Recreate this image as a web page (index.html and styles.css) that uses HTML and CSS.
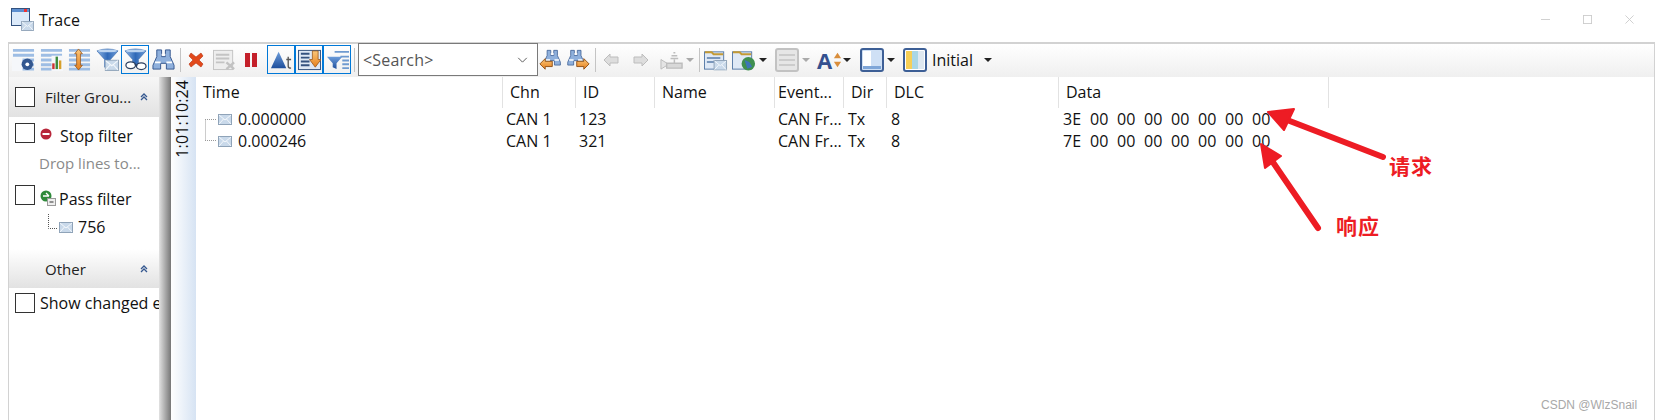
FILE: index.html
```html
<!DOCTYPE html>
<html lang="en">
<head>
<meta charset="utf-8">
<title>Trace</title>
<link rel="stylesheet" href="styles.css">
</head>
<body>
<svg class="defs" width="0" height="0">
  <defs>
    <linearGradient id="blue" x1="0" y1="0" x2="0" y2="1"><stop offset="0" stop-color="#6d9ddb"/><stop offset="1" stop-color="#1f4f9c"/></linearGradient>
    <linearGradient id="funnelg" x1="0" y1="0" x2="1" y2="0"><stop offset="0" stop-color="#8db4e4"/><stop offset=".5" stop-color="#2f69b8"/><stop offset="1" stop-color="#6e9bd6"/></linearGradient>
    <linearGradient id="org" x1="0" y1="0" x2="0" y2="1"><stop offset="0" stop-color="#fbc77a"/><stop offset="1" stop-color="#e57f1c"/></linearGradient>
    <symbol id="mail" viewBox="0 0 14 11"><rect x=".5" y=".5" width="13" height="10" fill="#c9d9ea" stroke="#8fa3b8"/><path d="M1 1l6 5 6-5M1 10l4.500-5M13 10L8.500 5" fill="none" stroke="#f4f8fc"/></symbol>
    <symbol id="lines" viewBox="0 0 24 24"><path d="M1 2.500h22M1 7.500h22M1 12.500h22M1 17.500h22M1 22h22" stroke="#9dbde4" stroke-width="3" fill="none"/></symbol>
    <symbol id="funnel" viewBox="0 0 24 24"><path d="M1 3q11-4 22 0l-8 9v5l-6 3v-8z" fill="url(#funnelg)" stroke="#3f6fb0" stroke-width=".7"/><ellipse cx="12" cy="3" rx="10" ry="1.500" fill="#bcd4f0"/></symbol>
    <symbol id="bino" viewBox="0 0 24 24"><path d="M5 2h5v7h4V2h5v7l4 9v4h-8v-6h-6v6H1v-4l4-9z" fill="#8fb0dc" stroke="#34578f"/><path d="M3 15h6M15 15h6M10 7h4" stroke="#fff" stroke-width="2"/></symbol>
    <symbol id="arrowl" viewBox="0 0 16 14"><path d="M1 7l6-6v3h8v6H7v3z" fill="url(#org)" stroke="#8a4a10"/></symbol>
    <symbol id="greyarrow" viewBox="0 0 16 14"><path d="M1 7l6-6v3h8v6H7v3z" fill="#ddd" stroke="#bdbdbd"/></symbol>
  </defs>
</svg>

<div class="window">
  <header class="titlebar">
    <svg class="title-icon" viewBox="0 0 24 23"><rect x=".5" y=".5" width="18" height="17" fill="#dceafa" stroke="#33527f"/><rect x="1" y="1" width="17" height="3" fill="#5d8fd0"/><rect x="13" y="1" width="3" height="3" fill="#e33"/><use href="#mail" x="9" y="13" width="15" height="10"/></svg>
    <span class="title-text">Trace</span>
    <div class="win-controls">
      <svg class="win-btn" viewBox="0 0 10 10"><path d="M0 5h10" stroke="#ccc"/></svg>
      <svg class="win-btn" viewBox="0 0 10 10"><rect x=".5" y=".5" width="9" height="9" fill="none" stroke="#ccc"/></svg>
      <svg class="win-btn" viewBox="0 0 10 10"><path d="M.5.500l9 9M9.500.500l-9 9" stroke="#ccc"/></svg>
    </div>
  </header>

  <div class="frame">
    <div class="toolbar">
      <div class="tb"><svg class="ico" viewBox="0 0 24 24"><use href="#lines" width="24" height="24"/><rect x="0" y="10" width="11" height="14" fill="#f5f7fa"/><circle cx="16" cy="17" r="6" fill="#34578f"/><circle cx="16" cy="17" r="2" fill="#fff"/></svg></div>
      <div class="tb"><svg class="ico" viewBox="0 0 24 24"><use href="#lines" width="24" height="24"/><rect x="12" y="8" width="12" height="16" fill="#f5f7fa"/><path d="M14 22v-6" stroke="#c33" stroke-width="2.500"/><path d="M17.500 22V9" stroke="#3a8a3a" stroke-width="2.500"/><path d="M21 22v-9" stroke="#d7a02a" stroke-width="2.500"/></svg></div>
      <div class="tb"><svg class="ico" viewBox="0 0 24 24"><use href="#lines" width="24" height="24"/><path d="M7 6l4-5 4 5h-2v12h2l-4 5-4-5h2V6z" fill="url(#org)" stroke="#96551a" stroke-width=".8"/></svg></div>
      <div class="tb"><svg class="ico" viewBox="0 0 24 24"><use href="#funnel" width="24" height="24"/><use href="#mail" x="9" y="12" width="15" height="12"/></svg></div>
      <div class="tb tb-on"><svg class="ico" viewBox="0 0 24 24"><use href="#funnel" width="24" height="24"/><ellipse cx="7" cy="18" rx="5" ry="3.500" fill="#fff" stroke="#2b3f60" stroke-width="1.300"/><ellipse cx="18" cy="19" rx="5" ry="3.500" fill="#fff" stroke="#2b3f60" stroke-width="1.300"/><path d="M11 17l3 1" stroke="#2b3f60"/></svg></div>
      <div class="tb"><svg class="ico" viewBox="0 0 24 24"><use href="#bino" width="24" height="24"/></svg></div>
      <i class="sep sep-a"></i>
      <div class="tb"><svg class="ico-s" viewBox="0 0 16 16"><path d="M3 1l5 4 5-4 2 3-4 4 4 4-2 3-5-4-5 4-2-3 4-4-4-4z" fill="#e2491b" stroke="#b5300d" stroke-width=".6"/></svg></div>
      <div class="tb"><svg class="ico" viewBox="0 0 24 24"><rect x=".5" y="2.500" width="20" height="20" fill="#eee" stroke="#c4c4c4"/><path d="M3 7h14M3 11h14M3 15h9" stroke="#c4c4c4" stroke-width="2"/><path d="M14 15l8 7M22 15l-8 7" stroke="#c2c2c2" stroke-width="2.500"/></svg></div>
      <div class="tb tb-pause"><svg class="ico-s" viewBox="0 0 16 16"><rect x="2" y="1" width="5" height="14" fill="#c4202a"/><rect x="9" y="1" width="5" height="14" fill="#c4202a"/></svg></div>
      <div class="tb tb-on"><svg class="ico" viewBox="0 0 24 24"><path d="M1 21L9 4l8 17z" fill="url(#blue)"/><path d="M19 9v10q0 2 3 2M17 12h5" fill="none" stroke="#555" stroke-width="1.400"/></svg></div>
      <div class="tb tb-on"><svg class="ico" viewBox="0 0 24 24"><rect x=".5" y="2.500" width="23" height="20" fill="#dfe8f4" stroke="#35527f"/><path d="M3 6h9M3 10h9M3 14h9M3 18h9" stroke="#35527f" stroke-width="2"/><path d="M15 3h6v9h3l-6 8-6-8h3z" fill="url(#org)" stroke="#96551a" stroke-width=".8"/></svg></div>
      <div class="tb tb-on"><svg class="ico" viewBox="0 0 24 24"><path d="M9 4h15M15 9h9M17 13h7M17 17h7M17 21h7" stroke="#6f9ad0" stroke-width="2" fill="none"/><path d="M1 9h16l-6 7v6l-4-2v-4z" fill="url(#blue)"/></svg></div>
      <i class="sep sep-b"></i>
      <div class="search"><span class="search-text">&lt;Search&gt;</span><svg class="search-chev" viewBox="0 0 12 7"><path d="M1 1l5 5 5-5" fill="none" stroke="#555" stroke-width="1.100"/></svg></div>
      <div class="tb tb-after"><svg class="ico" viewBox="0 0 26 24"><use href="#bino" x="5" y="0" width="20" height="20"/><use href="#arrowl" x="0" y="10" width="16" height="14"/></svg></div>
      <div class="tb"><svg class="ico" viewBox="0 0 26 24"><use href="#bino" x="0" y="0" width="20" height="20"/><g transform="translate(26 0) scale(-1 1)"><use href="#arrowl" x="0" y="10" width="16" height="14"/></g></svg></div>
      <i class="sep sep-d"></i>
      <div class="tb tb-nav"><svg class="ico-s" viewBox="0 0 16 14"><use href="#greyarrow" width="16" height="14"/></svg></div>
      <div class="tb tb-nav"><svg class="ico-s flip" viewBox="0 0 16 14"><use href="#greyarrow" width="16" height="14"/></svg></div>
      <div class="tb tb-bus"><svg class="ico-bus" viewBox="0 0 24 24"><path d="M1 12l8 5-8 5z" fill="#e4e4e4" stroke="#bbb"/><path d="M7 16h16v5H7zM15 16v-4M11 11h8M12 8h6M14 5h2" stroke="#bdbdbd" stroke-width="1.500" fill="#d8d8d8"/></svg><i class="caret caret-off"></i></div>
      <i class="sep sep-c"></i>
      <div class="ti"><svg class="ico-w" viewBox="0 0 25 22"><rect x=".5" y="2.500" width="20" height="18" fill="#dfe9f6" stroke="#587ba8"/><path d="M1 3h7l2 2h10" fill="none" stroke="#c49a35" stroke-width="2"/><path d="M3 9h14M3 13h8" stroke="#587ba8" stroke-width="1.500"/><use href="#mail" x="9" y="11" width="16" height="11"/></svg></div>
      <div class="ti ti-2"><svg class="ico-w" viewBox="0 0 25 22"><rect x=".5" y="2.500" width="20" height="18" fill="#dfe9f6" stroke="#587ba8"/><path d="M1 3h7l2 2h10" fill="none" stroke="#c49a35" stroke-width="2"/><circle cx="17" cy="15" r="7" fill="#3f8f50"/><path d="M13 11l5 2 3 5-5 2z" fill="#3c74b8"/></svg><i class="caret"></i></div>
      <div class="ti ti-3"><svg class="ico-w" viewBox="0 0 24 24"><rect x="1" y="1" width="22" height="22" rx="2" fill="#e6e6e6" stroke="#c2c2c2" stroke-width="2"/><path d="M4 7h16M4 12h16M4 17h16" stroke="#c4c4c4" stroke-width="1.500"/></svg><i class="caret caret-off"></i></div>
      <div class="ti ti-4"><span class="font-a">A</span><svg class="updown" viewBox="0 0 10 16"><path d="M5 0l4 6H1z" fill="#d98e3c"/><path d="M5 16l4-6H1z" fill="#d98e3c"/></svg><i class="caret"></i></div>
      <div class="ti ti-5"><svg class="ico-w" viewBox="0 0 24 24"><rect x="1" y="1" width="22" height="22" rx="2" fill="#cfe0f5" stroke="#3d5f96" stroke-width="2"/><rect x="3" y="3" width="8" height="15" fill="#fff"/><rect x="3" y="18" width="18" height="3" fill="#7fa6d8"/></svg><i class="caret"></i></div>
      <div class="ti ti-6"><svg class="ico-w" viewBox="0 0 24 24"><rect x="1" y="1" width="22" height="22" rx="2" fill="#fff" stroke="#3d5f96" stroke-width="2"/><rect x="3" y="3" width="6" height="18" fill="#f6cf57"/><rect x="9" y="3" width="6" height="18" fill="#a9d6e4"/><rect x="15" y="3" width="6" height="18" fill="#dfe8f0"/></svg><span class="initial">Initial</span><i class="caret caret-far"></i></div>
    </div>

    <div class="main">
      <aside class="side">
        <div class="group-head group-first">
          <span class="check"></span>
          <span class="group-title">Filter Grou...</span>
          <svg class="chev" viewBox="0 0 8 8"><path d="M1 4l3-3 3 3M1 7l3-3 3 3" fill="none" stroke="#34578f" stroke-width="1.300"/></svg>
        </div>
        <div class="filter-row stop-row">
          <span class="check check-up"></span>
          <svg class="filter-ico" viewBox="0 0 12 12"><circle cx="6" cy="6" r="5.500" fill="#b8263a"/><rect x="2.500" y="5" width="7" height="2" fill="#fff"/></svg>
          <span>Stop filter</span>
        </div>
        <div class="drop">Drop lines to...</div>
        <div class="filter-row pass-row">
          <span class="check check-up2"></span>
          <svg class="filter-ico pass-ico" viewBox="0 0 16 16"><circle cx="6" cy="6" r="5.500" fill="#2f8a3a"/><path d="M3 6h6M6 3l3 3" stroke="#fff" stroke-width="1.300" fill="none"/><rect x="7.500" y="8.500" width="8" height="7" fill="#eee" stroke="#999"/><path d="M9.500 12h4" stroke="#333"/></svg>
          <span>Pass filter</span>
        </div>
        <div class="child-row">
          <svg class="child-line" viewBox="0 0 9 15"><path d="M.5 0v14.500H9" fill="none" stroke="#555" stroke-dasharray="1 1"/></svg>
          <svg class="mail mail-child" viewBox="0 0 14 11"><use href="#mail" width="14" height="11"/></svg>
          <span>756</span>
        </div>
        <div class="group-head group-other">
          <span class="group-title group-title-other">Other</span>
          <svg class="chev" viewBox="0 0 8 8"><path d="M1 4l3-3 3 3M1 7l3-3 3 3" fill="none" stroke="#34578f" stroke-width="1.300"/></svg>
        </div>
        <div class="filter-row show-row">
          <span class="check"></span>
          <span class="nowrap">Show changed e</span>
        </div>
      </aside>
      <div class="splitter"></div>
      <div class="axis"><span class="axis-text">1:01:10:24</span></div>
      <section class="table">
        <div class="grid head">
          <div>Time</div><div>Chn</div><div>ID</div><div>Name</div><div>Event...</div><div>Dir</div><div>DLC</div><div>Data</div>
        </div>
        <div class="grid row">
          <div class="time"><svg class="tree"><path d="M.5 .5v21M0 .5h12M0 21.500h12" fill="none" stroke="#999" stroke-dasharray="1 1"/></svg><svg class="mail" viewBox="0 0 14 11"><use href="#mail" width="14" height="11"/></svg><span>0.000000</span></div>
          <div>CAN 1</div><div>123</div><div></div><div>CAN Fr...</div><div>Tx</div><div>8</div>
          <div class="bytes"><span>3E</span><span>00</span><span>00</span><span>00</span><span>00</span><span>00</span><span>00</span><span>00</span></div>
        </div>
        <div class="grid row">
          <div class="time"><svg class="tree"></svg><svg class="mail" viewBox="0 0 14 11"><use href="#mail" width="14" height="11"/></svg><span>0.000246</span></div>
          <div>CAN 1</div><div>321</div><div></div><div>CAN Fr...</div><div>Tx</div><div>8</div>
          <div class="bytes"><span>7E</span><span>00</span><span>00</span><span>00</span><span>00</span><span>00</span><span>00</span><span>00</span></div>
        </div>
      </section>
    </div>
  </div>

  <svg class="annot" viewBox="0 0 1659 420">
    <path d="M1383 157L1282 118" stroke="#ed1c24" stroke-width="6" stroke-linecap="round"/>
    <path d="M1268 112L1294 109 1284 130z" fill="#ed1c24" stroke="#ed1c24" stroke-width="2" stroke-linejoin="round"/>
    <path d="M1318 228L1268 155" stroke="#ed1c24" stroke-width="6" stroke-linecap="round"/>
    <path d="M1261 144L1281 156 1265 168z" fill="#ed1c24" stroke="#ed1c24" stroke-width="2" stroke-linejoin="round"/>
  </svg>
  <span class="note note-req">请求</span>
  <span class="note note-res">响应</span>
  <span class="mark">CSDN @WlzSnail</span>
</div>
</body>
</html>
```
FILE: styles.css
```css
* { box-sizing: border-box; }
html, body { margin: 0; padding: 0; }
body {
  width: 1659px;
  height: 420px;
  overflow: hidden;
  background: #fff;
  color: #111;
  font: 16px/22px "Open Sans", "Noto Sans", sans-serif;
}
.defs { position: absolute; }
.window { position: relative; width: 1659px; height: 420px; display: flex; flex-direction: column; overflow: hidden; }

.titlebar { height: 42px; flex: none; display: flex; align-items: center; padding: 0 25px 3px 11px; }
.title-icon { width: 24px; height: 23px; }
.title-text { margin-left: 4px; font-size: 16px; }
.win-controls { margin-left: auto; display: flex; gap: 33px; }
.win-btn { width: 9px; height: 9px; display: block; }

.frame { margin: 0 4px 0 8px; flex: 1; min-height: 0; border: 1px solid #d2d2d2; border-width: 2px 1px 0; display: flex; flex-direction: column; }
.toolbar { height: 33px; flex: none; display: flex; align-items: center; background: linear-gradient(#fff, #efefef); padding-bottom: 2px; }
.tb { width: 28px; height: 29px; flex: none; display: flex; align-items: center; justify-content: center; border: 1px solid transparent; }
.tb-on { border: 1px solid #0078d7; }
.tb-pause { margin: 0 3px 0 -1px; width: 27px; }
.ico { width: 23px; height: 23px; display: block; }
.ico-s { width: 16px; height: 16px; display: block; }
.ico-bus { width: 31px; height: 23px; flex: none; display: block; }
.ico-w { width: 24px; height: 24px; flex: none; display: block; }
.flip { transform: scaleX(-1); }
.sep { width: 1px; height: 24px; background: #c4c4c4; flex: none; margin: 0 3px; }
.sep-a { margin: 0 1px 0 3px; }
.sep-b { margin: 0 3px 0 3px; }
.sep-c { margin: 0 4px 0 3px; }
.sep-d { margin: 0 0 0 3px; }

.search { width: 180px; height: 33px; flex: none; border: 1px solid #7a7a7a; background: #fff; display: flex; align-items: center; justify-content: space-between; padding: 0 9px 0 4px; }
.search-text { font-size: 16px; color: #555; letter-spacing: .2px; }
.search-chev { width: 11px; height: 6px; }
.tb-after { margin-left: -2px; }
.tb-nav { width: 30px; }
.tb-bus { width: 40px; justify-content: flex-start; border: 0; }

.ti { flex: none; display: flex; align-items: center; height: 29px; }
.ti-2 { margin-left: 4px; }
.ti-3 { margin-left: 8px; }
.ti-4 { margin-left: 7px; }
.ti-5 { margin-left: 9px; }
.ti-6 { margin-left: 8px; }

.caret { width: 0; height: 0; border: 4px solid transparent; border-top: 4px solid #222; border-bottom: 0; flex: none; margin-left: 3px; display: block; }
.tb-bus .caret { margin-left: -1px; }
.caret-off { border-top-color: #aaa; }
.caret-far { margin-left: 11px; }
.font-a { font: bold 22px/24px "Open Sans", sans-serif; color: #34508f; width: 16px; }
.updown { width: 9px; height: 16px; flex: none; }
.ti-4 .caret { margin-left: 1px; }
.initial { font-size: 16px; margin-left: 5px; }

.main { flex: 1; min-height: 0; display: flex; }
.side { width: 150px; flex: none; overflow: hidden; }
.group-head { display: flex; align-items: center; background: linear-gradient(#fff, #e2e2e2); }
.group-first { height: 40px; padding-left: 6px; background: linear-gradient(#f6f6f6, #e2e2e2); }
.group-other { height: 39px; margin-top: 11px; }
.group-title { margin-left: 10px; font-size: 15px; width: 95px; white-space: nowrap; color: #222; }
.group-title-other { margin-left: 36px; }
.chev { width: 8px; height: 8px; flex: none; }
.check { width: 20px; height: 20px; flex: none; border: 1px solid #333; background: #fff; display: block; }
.check-up { margin-bottom: 6px; }
.check-up2 { margin-bottom: 8px; }
.filter-row { display: flex; align-items: center; padding-left: 6px; font-size: 16px; height: 22px; }
.stop-row { margin-top: 8px; }
.filter-ico { width: 12px; height: 12px; margin: 0 8px 4px 5px; flex: none; }
.pass-ico { width: 16px; height: 16px; margin: 0 3px 2px 5px; }
.drop { margin: 5px 0 0 30px; font-size: 15px; height: 22px; color: #8a8a8a; white-space: nowrap; }
.pass-row { margin-top: 14px; }
.child-row { display: flex; align-items: center; height: 22px; margin-top: 6px; padding-left: 39px; font-size: 16px; }
.child-line { width: 9px; height: 15px; margin: -12px 2px 0 0; flex: none; }
.show-row { margin-top: 4px; }
.show-row .nowrap { margin-left: 5px; white-space: nowrap; }

.splitter { width: 12px; flex: none; background: linear-gradient(90deg, #e2e2e2, #777); }
.axis { width: 25px; flex: none; background: linear-gradient(90deg, #fff, #d6e3f3); display: flex; justify-content: flex-start; align-items: flex-start; padding: 3px 0 0 1px; }
.axis-text { writing-mode: vertical-rl; transform: rotate(180deg); font-size: 16px; line-height: 20px; letter-spacing: .1px; }

.table { flex: 1; min-width: 0; }
.grid { display: grid; grid-template-columns: 307px 73px 79px 120px 69px 43px 172px 270px; }
.head { height: 31px; align-items: stretch; }
.head > div { padding: 4px 0 0 7px; border-right: 1px solid #e2e2e2; white-space: nowrap; overflow: hidden; font-size: 16px; }
.head > div:nth-child(5) { padding-left: 3px; }
.row { height: 22px; font-size: 16px; line-height: 22px; }
.row > div { padding-left: 3px; white-space: nowrap; }
.row > div:nth-child(6), .row > div:nth-child(7) { padding-left: 4px; }
.row > .time { display: flex; align-items: center; padding-left: 9px; }
.tree { width: 12px; height: 1px; margin-right: 1px; flex: none; overflow: visible; }
.mail { width: 14px; height: 11px; flex: none; margin-right: 6px; }
.mail-child { margin-right: 5px; }
.row > .bytes { display: flex; padding-left: 4px; }
.bytes span { width: 27px; flex: none; }

.annot { position: absolute; left: 0; top: 0; width: 1659px; height: 420px; pointer-events: none; }
.note { position: absolute; font: bold 21px/24px "Noto Sans CJK SC", sans-serif; color: #ed1c24; letter-spacing: 1px; }
.note-req { left: 1389px; top: 153px; }
.note-res { left: 1336px; top: 213px; }
.mark { position: absolute; left: 1541px; top: 396px; font: 12px/18px "Liberation Sans", sans-serif; color: #a8a8a8; }
```
